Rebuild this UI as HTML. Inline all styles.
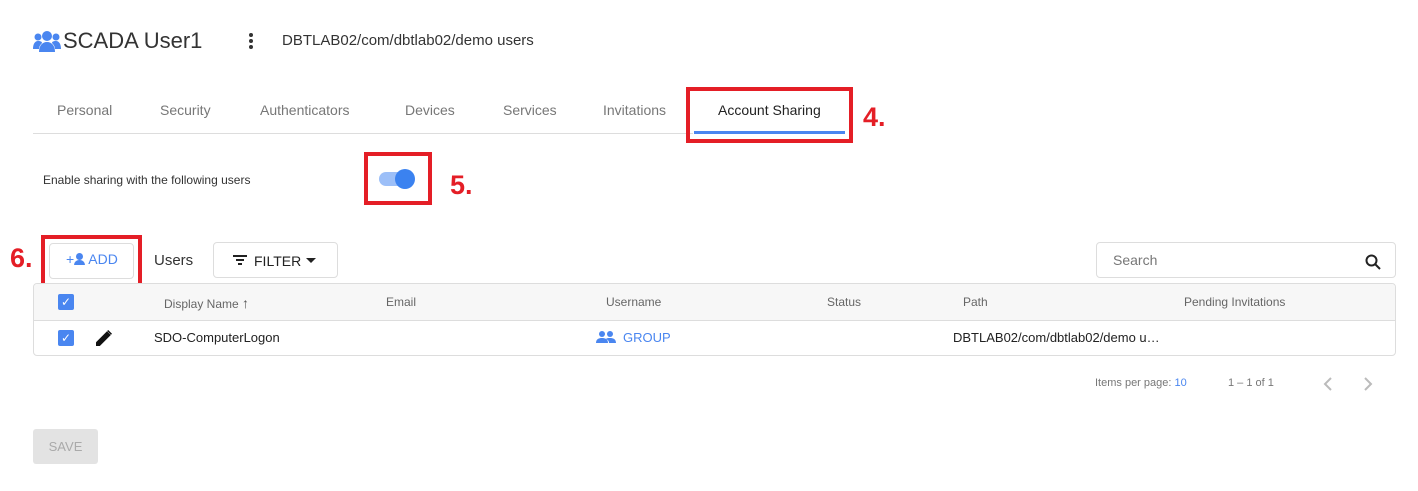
<!DOCTYPE html>
<html><head><style>
*{margin:0;padding:0;box-sizing:border-box}
body{width:1418px;height:491px;background:#fff;font-family:"Liberation Sans",sans-serif;position:relative;overflow:hidden;color:#333}
.a{position:absolute;white-space:nowrap}
.tab{position:absolute;top:102px;font-size:14px;color:#777}
.hd{position:absolute;top:295px;font-size:12px;color:#666}
.red{position:absolute;border:4px solid #e41e26}
.num{position:absolute;color:#e41e26;font-weight:bold;font-size:27px}
</style></head><body>
<svg class="a" style="left:33px;top:29px" width="28" height="24" viewBox="0 0 28 24"><g fill="#4a86f0"><circle cx="14" cy="7" r="5"/><circle cx="5" cy="8" r="3.5"/><circle cx="23" cy="8" r="3.5"/><path d="M6 23c0-6 3-10 8-10s8 4 8 10z"/><path d="M0 20c0-5 2-8 5-8s4 1 4 2c-2 2-3 4-3 6z"/><path d="M28 20c0-5-2-8-5-8s-4 1-4 2c2 2 3 4 3 6z"/></g></svg>
<div class="a" style="left:63px;top:28px;font-size:22px;color:#333">SCADA User1</div>
<div class="a" style="left:249px;top:33px;width:4px"><div style="width:4px;height:4px;background:#333;border-radius:50%;margin-bottom:2px"></div><div style="width:4px;height:4px;background:#333;border-radius:50%;margin-bottom:2px"></div><div style="width:4px;height:4px;background:#333;border-radius:50%"></div></div>
<div class="a" style="left:282px;top:32px;font-size:15px;color:#333">DBTLAB02/com/dbtlab02/demo users</div>
<div class="tab" style="left:57px">Personal</div>
<div class="tab" style="left:160px">Security</div>
<div class="tab" style="left:260px">Authenticators</div>
<div class="tab" style="left:405px">Devices</div>
<div class="tab" style="left:503px">Services</div>
<div class="tab" style="left:603px">Invitations</div>
<div class="tab" style="left:718px;color:#222">Account Sharing</div>
<div class="a" style="left:33px;top:133px;width:660px;height:1px;background:#ddd"></div>
<div class="a" style="left:694px;top:131px;width:151px;height:3px;background:#4a86f0"></div>
<div class="red" style="left:686px;top:87px;width:167px;height:56px"></div>
<div class="num" style="left:863px;top:102px">4.</div>
<div class="a" style="left:43px;top:173px;font-size:12px;color:#333">Enable sharing with the following users</div>
<div class="a" style="left:379px;top:172px;width:34px;height:14px;border-radius:7px;background:#9cbff8"></div>
<div class="a" style="left:395px;top:169px;width:20px;height:20px;border-radius:50%;background:#3b82f0"></div>
<div class="red" style="left:364px;top:152px;width:68px;height:53px"></div>
<div class="num" style="left:450px;top:170px">5.</div>
<div class="a" style="left:49px;top:243px;width:85px;height:36px;border:1px solid #ddd;border-radius:4px"></div>
<div class="a" style="left:66px;top:251px;font-size:14px;color:#4a86f0">+<span style="display:inline-block;width:11px;height:12px;vertical-align:-1px;position:relative"><span style="position:absolute;left:2px;top:0;width:7px;height:7px;border-radius:50%;background:#4a86f0"></span><span style="position:absolute;left:0;top:7px;width:11px;height:5px;border-radius:5px 5px 0 0;background:#4a86f0"></span></span> ADD</div>
<div class="red" style="left:41px;top:235px;width:101px;height:52px"></div>
<div class="num" style="left:10px;top:243px">6.</div>
<div class="a" style="left:154px;top:252px;font-size:15px;color:#333">Users</div>
<div class="a" style="left:213px;top:242px;width:125px;height:36px;border:1px solid #ddd;border-radius:4px"></div>
<div class="a" style="left:233px;top:255px;width:14px"><div style="height:2px;background:#222;margin-bottom:2px"></div><div style="height:2px;background:#222;margin:0 3px 2px"></div><div style="height:2px;background:#222;margin:0 5px"></div></div>
<div class="a" style="left:254px;top:253px;font-size:14px;color:#222">FILTER</div>
<div class="a" style="left:306px;top:258px;border-left:5px solid transparent;border-right:5px solid transparent;border-top:5px solid #222"></div>
<div class="a" style="left:1096px;top:242px;width:300px;height:36px;border:1px solid #ddd;border-radius:4px"></div>
<div class="a" style="left:1113px;top:252px;font-size:14px;color:#777">Search</div>
<svg class="a" style="left:1365px;top:254px" width="16" height="16" viewBox="0 0 16 16"><circle cx="6.5" cy="6.5" r="5" fill="none" stroke="#222" stroke-width="2"/><path d="M10 10l5 5" stroke="#222" stroke-width="2"/></svg>
<div class="a" style="left:33px;top:283px;width:1363px;height:73px;border:1px solid #ddd;border-radius:4px;overflow:hidden"><div style="height:37px;background:#f7f7f7;border-bottom:1px solid #ddd"></div></div>
<div class="a" style="left:58px;top:294px;width:16px;height:16px;background:#4a86f0;border-radius:2px;color:#fff;font-size:12px;text-align:center;line-height:16px">✓</div>
<div class="hd" style="left:164px">Display Name <b style="font-size:14px;color:#555">↑</b></div>
<div class="hd" style="left:386px">Email</div>
<div class="hd" style="left:606px">Username</div>
<div class="hd" style="left:827px">Status</div>
<div class="hd" style="left:963px">Path</div>
<div class="hd" style="left:1184px">Pending Invitations</div>
<div class="a" style="left:58px;top:330px;width:16px;height:16px;background:#4a86f0;border-radius:2px;color:#fff;font-size:12px;text-align:center;line-height:16px">✓</div>
<svg class="a" style="left:95px;top:329px" width="18" height="18" viewBox="0 0 18 18"><path d="M1 17v-3.8L12 2.2 15.8 6 4.8 17z" fill="#111"/><path d="M13.2 1l3.8 3.8-1 1L12.2 2z" fill="#111"/></svg>
<div class="a" style="left:154px;top:330px;font-size:13px;color:#222">SDO-ComputerLogon</div>
<svg class="a" style="left:596px;top:331px" width="20" height="12" viewBox="0 0 20 12"><g fill="#4a86f0"><circle cx="6" cy="3" r="3"/><circle cx="14" cy="3" r="3"/><path d="M0 12c0-4 3-5 6-5s6 1 6 5z"/><path d="M10 8c1-1 2-1 4-1 3 0 6 1 6 5h-7c0-2-1-3-3-4z"/></g></svg>
<div class="a" style="left:623px;top:330px;font-size:13px;color:#4a86f0">GROUP</div>
<div class="a" style="left:953px;top:330px;font-size:13px;color:#222">DBTLAB02/com/dbtlab02/demo u…</div>
<div class="a" style="left:1095px;top:377px;font-size:11px;color:#777">Items per page: <span style="color:#4a86f0">10</span></div>
<div class="a" style="left:1228px;top:377px;font-size:11px;color:#777">1 – 1 of 1</div>
<svg class="a" style="left:1322px;top:377px" width="12" height="14" viewBox="0 0 12 14"><path d="M9 1L3 7l6 6" fill="none" stroke="#bbb" stroke-width="2"/></svg>
<svg class="a" style="left:1362px;top:377px" width="12" height="14" viewBox="0 0 12 14"><path d="M3 1l6 6-6 6" fill="none" stroke="#bbb" stroke-width="2"/></svg>
<div class="a" style="left:33px;top:429px;width:65px;height:35px;background:#e3e3e3;border-radius:3px;color:#aaa;font-size:13px;text-align:center;line-height:35px">SAVE</div>
</body></html>
